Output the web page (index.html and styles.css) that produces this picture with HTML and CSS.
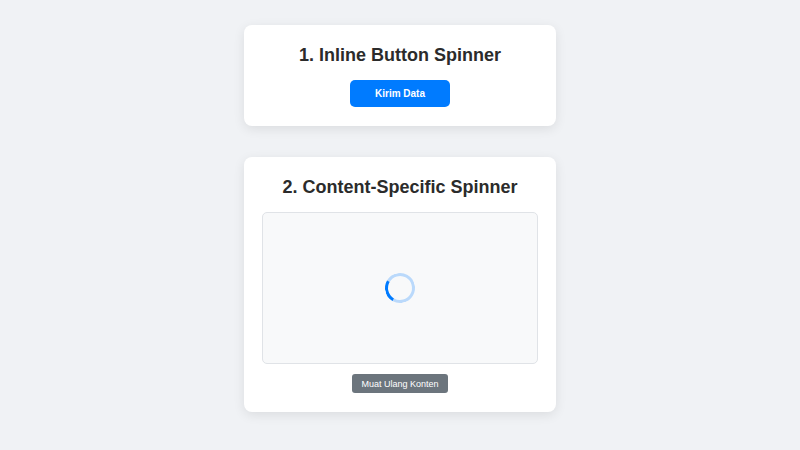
FILE: index.html
```html
<!DOCTYPE html>
<html lang="id">
<head>
<meta charset="utf-8">
<title>Spinner Demo</title>
<link rel="stylesheet" href="styles.css">
</head>
<body>
<main class="page">
  <section class="card">
    <h2 class="card-title">1. Inline Button Spinner</h2>
    <button class="btn btn-primary" type="button">Kirim Data</button>
  </section>
  <section class="card">
    <h2 class="card-title">2. Content-Specific Spinner</h2>
    <div class="content-box">
      <div class="spinner"></div>
    </div>
    <button class="btn btn-secondary" type="button">Muat Ulang Konten</button>
  </section>
</main>
</body>
</html>
```
FILE: styles.css
```css
* { box-sizing: border-box; }
html, body { margin: 0; padding: 0; }
body {
  background: #f0f2f5;
  font-family: "Liberation Sans", Arial, sans-serif;
  color: #333;
  width: 800px;
  height: 450px;
  overflow: hidden;
}
.page {
  display: flex;
  flex-direction: column;
  align-items: center;
  gap: 31px;
  padding-top: 25px;
}
.card {
  width: 312px;
  background: #fff;
  border-radius: 8px;
  box-shadow: 0 3px 12px rgba(0, 0, 0, 0.09);
  padding: 18px 18px 19px;
  display: flex;
  flex-direction: column;
  align-items: center;
}
.card-title {
  margin: 0 0 13px;
  font-size: 18px;
  line-height: 24px;
  font-weight: bold;
  color: #2b2b2b;
  text-align: center;
}
.btn {
  border: none;
  font-family: inherit;
  color: #fff;
  cursor: pointer;
}
.btn-primary {
  background: #007bff;
  width: 100px;
  height: 27px;
  font-size: 10px;
  font-weight: bold;
  border-radius: 5px;
  padding: 0;
}
.content-box {
  width: 276px;
  height: 152px;
  align-self: center;
  margin: 0 -2px;
  background: #f8f9fa;
  border: 1px solid #e0e3e7;
  border-radius: 5px;
  display: flex;
  align-items: center;
  justify-content: center;
}
.spinner {
  width: 30px;
  height: 30px;
  border-radius: 50%;
  border: 3px solid rgba(0, 123, 255, 0.25);
  border-left-color: #007bff;
  transform: rotate(-15deg);
}
.btn-secondary {
  margin-top: 10px;
  background: #6c757d;
  width: 96px;
  height: 19px;
  font-size: 9px;
  border-radius: 3px;
  padding: 0;
}
```
